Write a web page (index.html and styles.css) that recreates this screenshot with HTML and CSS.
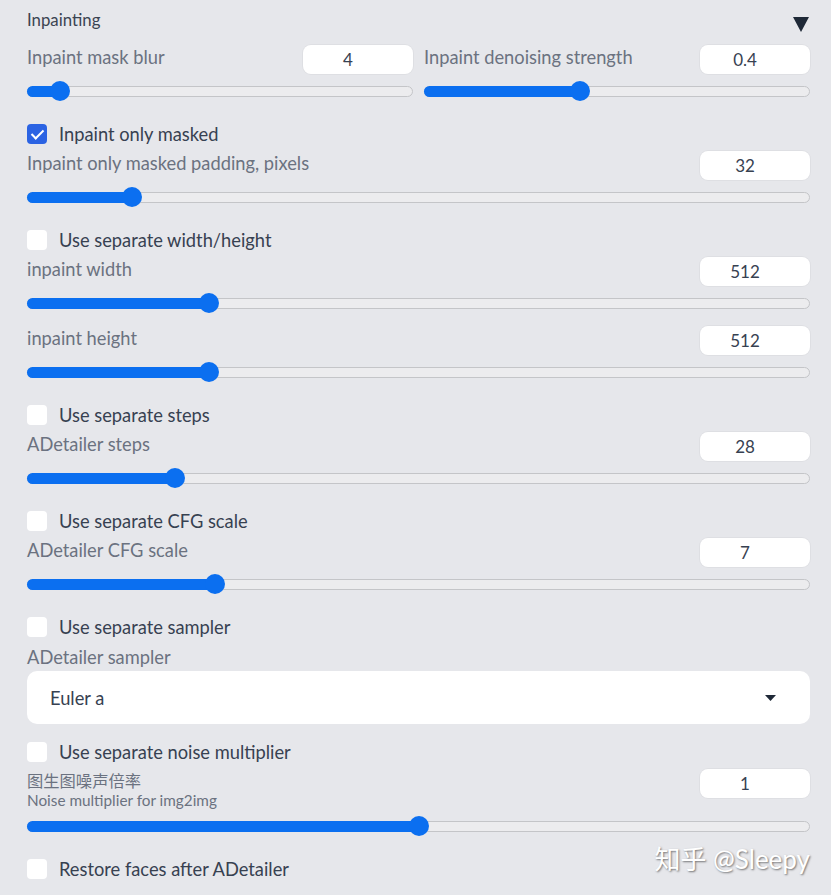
FILE: index.html
```html
<!DOCTYPE html>
<html lang="en">

<head>
    <meta charset="UTF-8">
    <meta name="viewport" content="width=device-width, initial-scale=1.0">
    <title>ADetailer - Inpainting</title>
    <link rel="stylesheet" href="styles.css">
</head>

<body>
    <div class="panel">
        <div class="panel-head">
            <span class="panel-title">Inpainting</span>
            <svg class="toggle" width="16" height="15" viewBox="0 0 16 15"><path d="M0 0H16L8 15Z" fill="#1f2937"/></svg>
        </div>

        <div class="two-col">
            <div class="field">
                <div class="field-head">
                    <span class="field-label">Inpaint mask blur</span>
                    <span class="num">4</span>
                </div>
                <div class="slider" style="--p: 0.0625"><div class="fill"></div></div>
            </div>
            <div class="field">
                <div class="field-head">
                    <span class="field-label">Inpaint denoising strength</span>
                    <span class="num">0.4</span>
                </div>
                <div class="slider" style="--p: 0.4"><div class="fill"></div></div>
            </div>
        </div>

        <label class="check checked"><span class="box"></span>Inpaint only masked</label>
        <div class="field">
            <div class="field-head">
                <span class="field-label">Inpaint only masked padding, pixels</span>
                <span class="num">32</span>
            </div>
            <div class="slider" style="--p: 0.125"><div class="fill"></div></div>
        </div>

        <label class="check"><span class="box"></span>Use separate width/height</label>
        <div class="field">
            <div class="field-head">
                <span class="field-label">inpaint width</span>
                <span class="num">512</span>
            </div>
            <div class="slider" style="--p: 0.2258"><div class="fill"></div></div>
        </div>
        <div class="field">
            <div class="field-head">
                <span class="field-label">inpaint height</span>
                <span class="num">512</span>
            </div>
            <div class="slider" style="--p: 0.2258"><div class="fill"></div></div>
        </div>

        <label class="check"><span class="box"></span>Use separate steps</label>
        <div class="field">
            <div class="field-head">
                <span class="field-label">ADetailer steps</span>
                <span class="num">28</span>
            </div>
            <div class="slider" style="--p: 0.1812"><div class="fill"></div></div>
        </div>

        <label class="check"><span class="box"></span>Use separate CFG scale</label>
        <div class="field">
            <div class="field-head">
                <span class="field-label">ADetailer CFG scale</span>
                <span class="num">7</span>
            </div>
            <div class="slider" style="--p: 0.2333"><div class="fill"></div></div>
        </div>

        <label class="check"><span class="box"></span>Use separate sampler</label>
        <div class="select-field">
            <span class="field-label">ADetailer sampler</span>
            <div class="select">
                <span>Euler a</span>
                <svg width="11" height="6" viewBox="0 0 11 6"><path d="M0 0H11L5.5 6Z" fill="#1f2937"/></svg>
            </div>
        </div>

        <label class="check"><span class="box"></span>Use separate noise multiplier</label>
        <div class="field">
            <div class="field-head tall">
                <span class="field-label stacked">
                    <span class="cn">图生图噪声倍率</span>
                    <span class="en">Noise multiplier for img2img</span>
                </span>
                <span class="num">1</span>
            </div>
            <div class="slider" style="--p: 0.5"><div class="fill"></div></div>
        </div>

        <label class="check last"><span class="box"></span>Restore faces after ADetailer</label>
    </div>

    <div class="watermark">知乎 @Sleepy</div>
</body>

</html>
```

FILE: styles.css
```css
body {
    margin: 0;
    background-color: #e6e7eb;
    font-family: Lato, "Noto Sans CJK SC", sans-serif;
    color: #374151;
}

.panel {
    padding: 8px 21px 20px 27px;
}

.panel-head {
    display: flex;
    justify-content: space-between;
    align-items: flex-start;
    height: 37px;
}

.panel-title {
    font-size: 16.8px;
    line-height: 24px;
    color: #3b4452;
}

.toggle {
    margin-top: 9px;
    margin-right: 1px;
}

.two-col {
    display: grid;
    grid-template-columns: 1fr 1fr;
    column-gap: 11px;
}

.field + .field {
    margin-top: 13px;
}

.two-col .field + .field {
    margin-top: 0;
}

.field-head {
    display: flex;
    justify-content: space-between;
    align-items: center;
    height: 29px;
}

.field-label {
    font-size: 18.3px;
    color: #6b7280;
    margin-top: -6px;
}

.num {
    box-sizing: border-box;
    width: 110px;
    height: 29px;
    padding-right: 20px;
    line-height: 29px;
    text-align: center;
    background-color: #fff;
    border-radius: 8px;
    font-size: 17px;
    color: #374151;
    box-shadow: 0 0 0 1px rgba(0, 0, 0, 0.03);
}

.slider {
    position: relative;
    margin-top: 7px;
    height: 20px;
}

.slider::before {
    content: "";
    position: absolute;
    left: 0;
    right: 0;
    top: 5px;
    height: 9px;
    background-color: #ececee;
    border: 1px solid #c4c5c8;
    border-radius: 6px;
}

.fill {
    position: absolute;
    left: 0;
    top: 5px;
    height: 11px;
    width: calc(10px + (100% - 20px) * var(--p));
    background-color: #0b6ff0;
    border-radius: 6px 0 0 6px;
}

.fill::after {
    content: "";
    position: absolute;
    right: -10px;
    top: -5px;
    width: 20px;
    height: 20px;
    border-radius: 50%;
    background-color: #0b6ff0;
}

.check {
    display: flex;
    align-items: center;
    height: 20px;
    margin-top: 23px;
    margin-bottom: 7px;
    font-size: 18.3px;
    color: #374151;
}

.box {
    width: 20px;
    height: 20px;
    border-radius: 4px;
    background-color: #fff;
    margin-right: 12px;
    position: relative;
    flex-shrink: 0;
}

.checked .box {
    background-color: #2b63e3;
}

.checked .box::after {
    content: "";
    position: absolute;
    left: 7px;
    top: 3px;
    width: 5px;
    height: 10px;
    border: solid #fff;
    border-width: 0 2.5px 2.5px 0;
    transform: rotate(45deg);
}

.select-field .field-label {
    display: block;
    margin-top: 0;
    line-height: 26px;
}

.select {
    display: flex;
    justify-content: space-between;
    align-items: center;
    height: 53px;
    margin-top: 1px;
    padding: 0 34px 0 23px;
    background-color: #fff;
    border-radius: 10px;
    font-size: 18.3px;
    color: #374151;
}

.select-field + .check {
    margin-top: 18px;
}

.field-head.tall {
    height: 40px;
    align-items: flex-start;
}

.stacked {
    display: flex;
    flex-direction: column;
    margin-top: 0;
}

.stacked .cn {
    font-size: 16.3px;
    line-height: 23px;
}

.stacked .en {
    font-size: 15.3px;
    line-height: 16px;
}

.tall + .slider {
    margin-top: 7px;
}

.watermark {
    position: absolute;
    right: 21px;
    top: 839px;
    font-size: 26px;
    color: #fff;
    text-shadow: 1px 1px 2px rgba(0, 0, 0, 0.5);
}
```
